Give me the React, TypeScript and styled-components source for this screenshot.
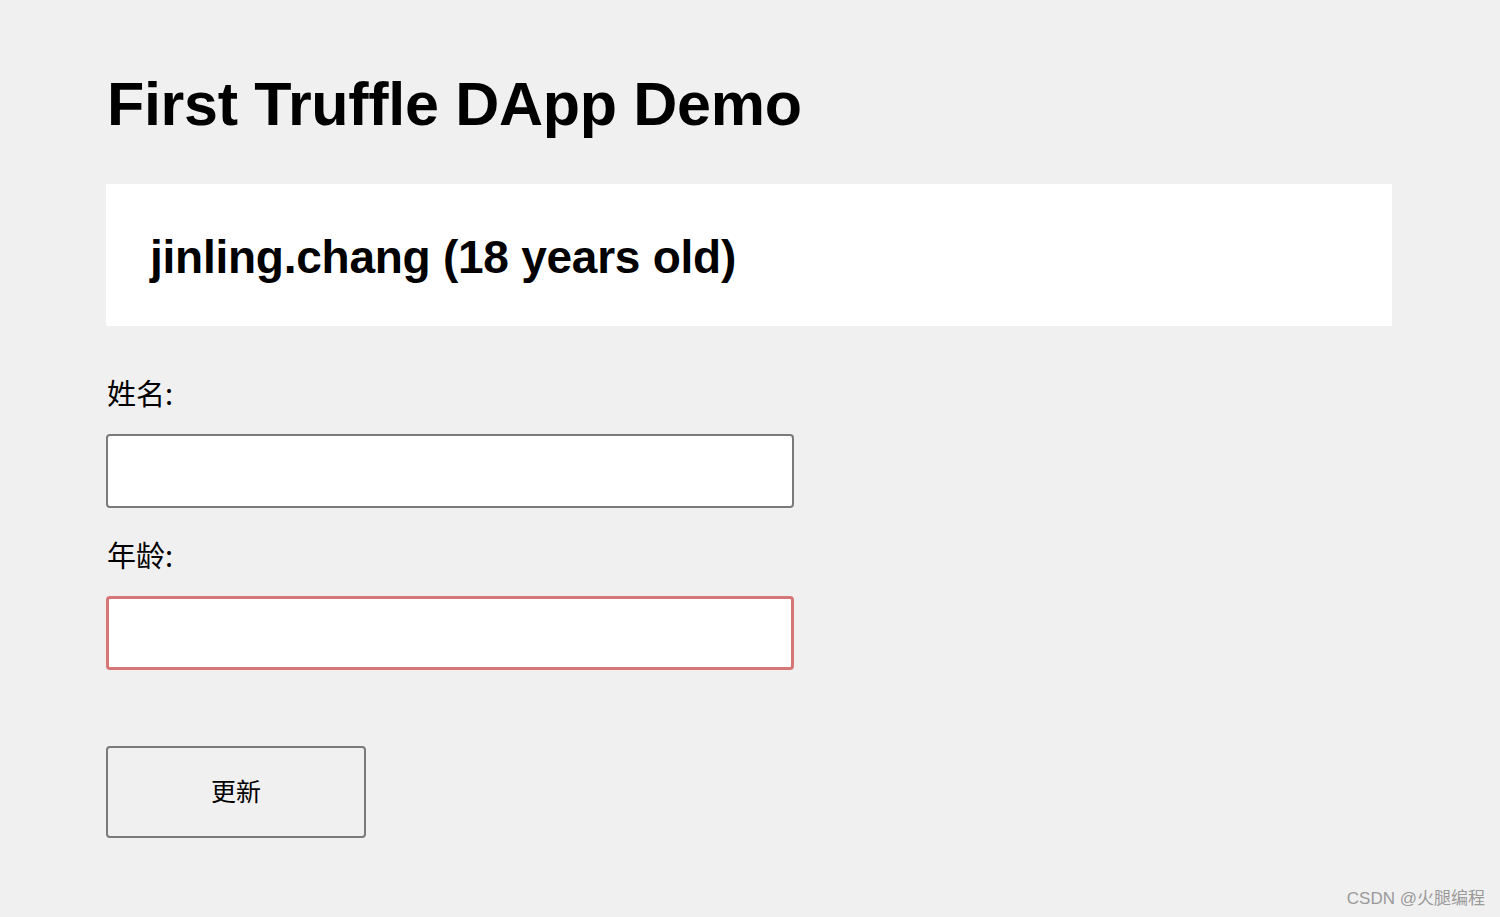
import React from 'react';
import styled, { createGlobalStyle } from 'styled-components';

const GlobalStyle = createGlobalStyle`
  html, body {
    margin: 0;
    padding: 0;
    background: #f0f0f0;
  }

  body {
    font-family: "Liberation Sans", Arial, "Noto Sans CJK SC", sans-serif;
    color: #000;
  }
`;

const Page = styled.div`
  position: relative;
  min-height: 917px;
  padding: 0 108px 0 106px;
  box-sizing: border-box;
`;

const Title = styled.h1`
  margin: 0;
  padding-top: 68px;
  font-size: 61px;
  line-height: 72px;
  font-weight: 700;
  letter-spacing: -0.3px;
  padding-left: 1px;
`;

const ProfileCard = styled.div`
  margin-top: 44px;
  height: 142px;
  background: #fff;
  display: flex;
  align-items: center;
  padding-left: 44px;
`;

const ProfileName = styled.h2`
  margin: 0;
  font-size: 46px;
  font-weight: 700;
  letter-spacing: -0.25px;
  padding-top: 4px;
`;

const Form = styled.form`
  display: flex;
  flex-direction: column;
  align-items: flex-start;
  padding-top: 45px;
`;

const Label = styled.label`
  font-family: "Noto Sans CJK SC", sans-serif;
  font-size: 29px;
  line-height: 42px;
  padding-left: 1px;
`;

const TextInput = styled.input<{ $invalid?: boolean }>`
  box-sizing: border-box;
  width: 688px;
  height: 74px;
  margin-top: 21px;
  margin-bottom: 25px;
  border: ${p => (p.$invalid ? '3px solid #d67676' : '2px solid #7a7a7a')};
  border-radius: 4px;
  background: #fff;
  outline: none;
  font-size: 26px;
  padding: 0 12px;
`;

const SubmitButton = styled.button`
  box-sizing: border-box;
  margin-top: 51px;
  width: 260px;
  height: 92px;
  padding-bottom: 6px;
  border: 2px solid #7a7a7a;
  border-radius: 4px;
  background: #f0f0f0;
  font-family: "Noto Sans CJK SC", sans-serif;
  font-size: 25px;
  color: #000;
  cursor: pointer;
`;

const Watermark = styled.div`
  position: absolute;
  right: 15px;
  bottom: 8px;
  font-family: "Liberation Sans", "Noto Sans CJK SC", sans-serif;
  font-size: 17px;
  color: #9a9a9a;
`;

const App = () => (
  <>
    <GlobalStyle />
    <Page>
      <Title>First Truffle DApp Demo</Title>
      <ProfileCard>
        <ProfileName>jinling.chang (18 years old)</ProfileName>
      </ProfileCard>
      <Form onSubmit={e => e.preventDefault()}>
        <Label htmlFor="name">姓名:</Label>
        <TextInput id="name" type="text" />
        <Label htmlFor="age">年龄:</Label>
        <TextInput id="age" type="text" $invalid />
        <SubmitButton type="submit">更新</SubmitButton>
      </Form>
      <Watermark>CSDN @火腿编程</Watermark>
    </Page>
  </>
);

export default App;
